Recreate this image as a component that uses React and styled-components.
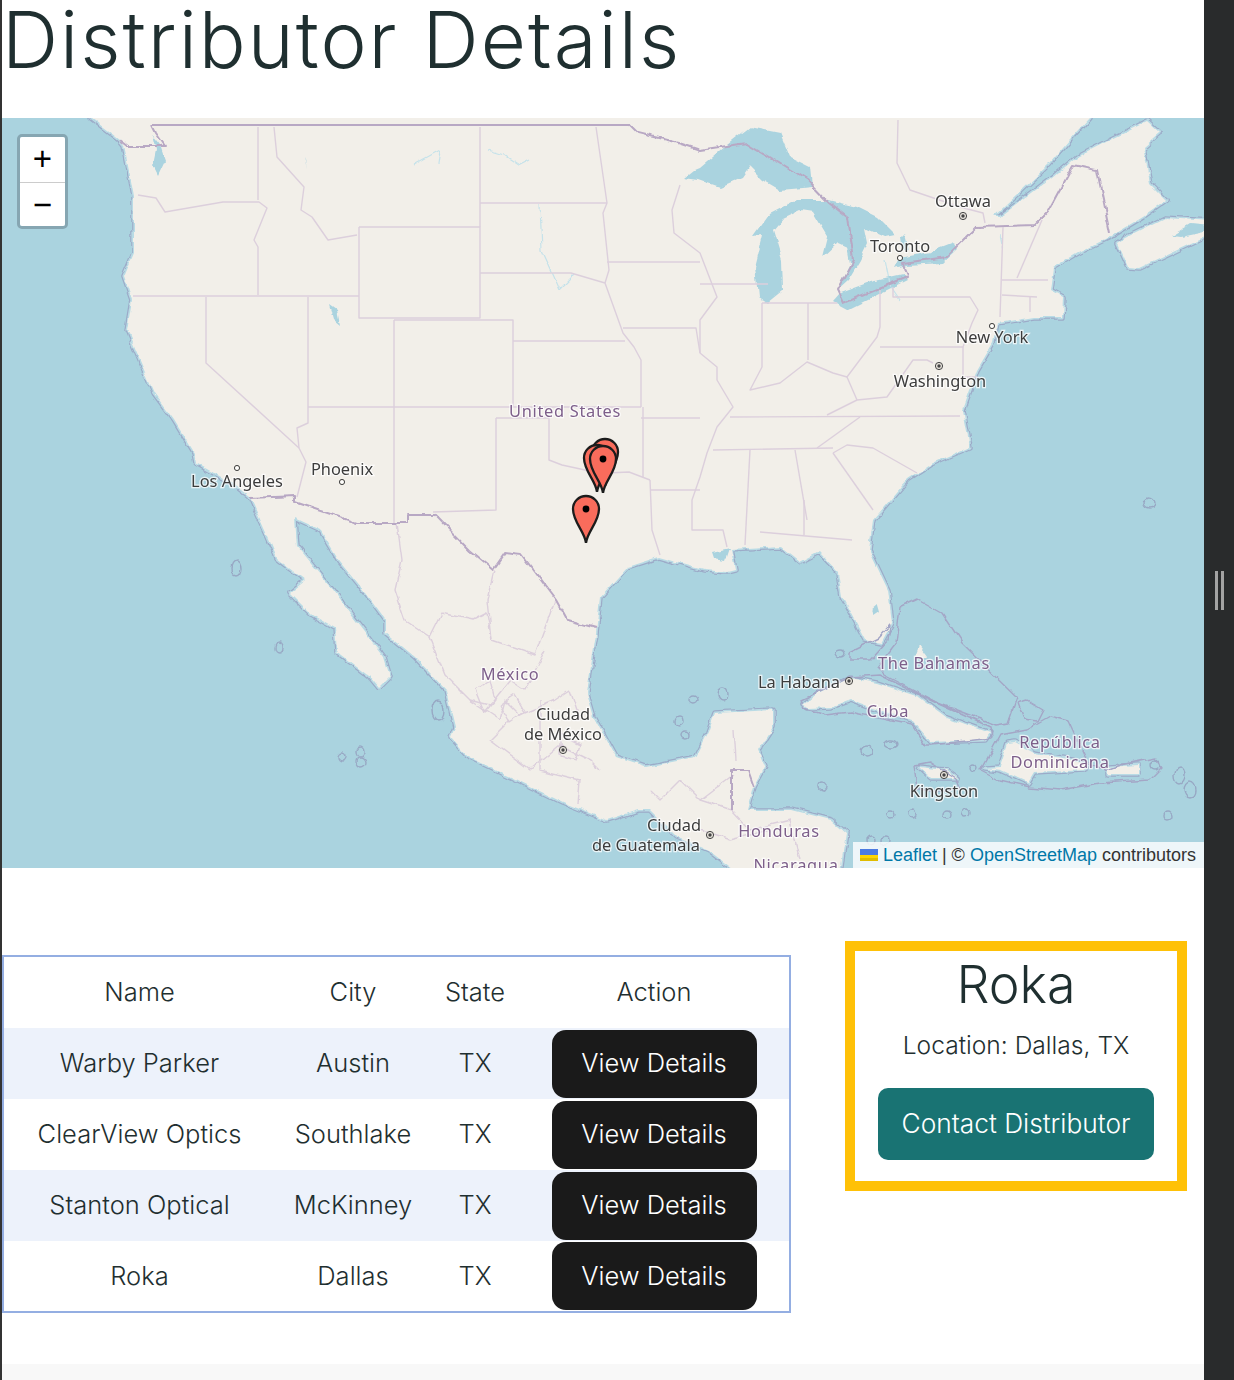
import React from "react";
import styled, { createGlobalStyle } from "styled-components";

const GlobalStyle = createGlobalStyle`
  html, body {
    margin: 0;
    padding: 0;
    background: #fff;
  }
`;

const Shell = styled.div`
  display: flex;
  width: 1234px;
  height: 1380px;
  overflow: hidden;
`;

const Page = styled.main`
  flex: 1;
  min-width: 0;
  display: flex;
  flex-direction: column;
  border-left: 2px solid #333;
  background: #fff;
`;

const Sidebar = styled.aside`
  width: 30px;
  background: #292b2c;
  display: flex;
  align-items: center;
  justify-content: center;
  gap: 3px;
  padding-bottom: 200px;
  box-sizing: border-box;
`;

const Grip = styled.span`
  width: 3px;
  height: 39px;
  background: #a3a3a3;
`;

const Title = styled.h1`
  margin: 0;
  height: 118px;
  box-sizing: border-box;
  font-family: Inter, sans-serif;
  font-weight: 300;
  font-size: 78px;
  letter-spacing: 2px;
  line-height: 80px;
  color: #1f2f30;
  white-space: nowrap;
`;

const MapBox = styled.section`
  position: relative;
  height: 750px;
  overflow: hidden;
  background: #aad3df;
`;

const MapSvg = styled.svg`
  display: block;
  width: 1202px;
  height: 750px;
  filter: blur(0.5px);
`;

const Zoom = styled.div`
  position: absolute;
  left: 15px;
  top: 16px;
  width: 45px;
  display: flex;
  flex-direction: column;
  border: 3px solid #86a6b2;
  border-radius: 5px;
  overflow: hidden;
`;

const ZoomButton = styled.button`
  width: 45px;
  height: 44.5px;
  padding: 0;
  border: 0;
  background: #fff;
  color: #000;
  font-family: "Liberation Sans", sans-serif;
  font-size: 33px;
  line-height: 44px;
  & + & {
    border-top: 1px solid #ccc;
  }
`;

const Attribution = styled.div`
  position: absolute;
  right: 0;
  bottom: 0;
  height: 26px;
  padding: 0 8px 0 7px;
  display: flex;
  align-items: center;
  gap: 5px;
  background: rgba(255, 255, 255, 0.8);
  font-family: "Liberation Sans", sans-serif;
  font-size: 18px;
  color: #333;
  white-space: nowrap;
`;

const AttrLink = styled.a`
  color: #0078a8;
`;

const Flag = styled.svg`
  width: 18px;
  height: 12px;
  display: block;
`;

const Lower = styled.section`
  flex: 1;
  display: flex;
  align-items: flex-start;
  padding-top: 73px;
  gap: 54px;
`;

const Table = styled.table`
  width: 788px;
  margin-top: 14px;
  border-collapse: collapse;
  table-layout: fixed;
  border: 2px solid #94aee2;
  font-family: Inter, sans-serif;
  font-weight: 300;
  font-size: 25.5px;
  color: #1f2f30;
`;

const HeadCell = styled.th`
  height: 69px;
  padding: 0 0 2px;
  font-weight: 300;
  text-align: center;
  width: ${(p) => p.$w}px;
`;

const Row = styled.tr`
  height: 71px;
  background: ${(p) => (p.$tinted ? "#edf2fb" : "#fff")};
`;

const Cell = styled.td`
  padding: 0 0 2px;
  text-align: center;
  white-space: nowrap;
`;

const ActionCell = styled.td`
  padding: 0;
`;

const DetailsButton = styled.button`
  width: 205px;
  height: 68px;
  display: block;
  margin: 0 auto;
  padding: 0 0 2px;
  border: 0;
  border-radius: 14px;
  background: #1a1a1a;
  color: #fff;
  font-family: Inter, sans-serif;
  font-weight: 300;
  font-size: 25.5px;
`;

const Card = styled.aside`
  width: 342px;
  height: 250px;
  box-sizing: border-box;
  border: 10px solid #ffc107;
  display: flex;
  flex-direction: column;
  align-items: center;
  color: #1f2f30;
  font-family: Inter, sans-serif;
  font-weight: 300;
`;

const CardName = styled.h2`
  margin: 4px 0 0;
  font-weight: 300;
  font-size: 52px;
  line-height: 60px;
`;

const CardLocation = styled.p`
  margin: 12px 0 0;
  font-size: 24.6px;
  line-height: 36px;
`;

const ContactButton = styled.button`
  width: 276px;
  height: 72px;
  margin-top: 25px;
  padding: 0 0 2px;
  border: 0;
  border-radius: 10px;
  background: #197373;
  color: #fff;
  font-family: Inter, sans-serif;
  font-weight: 300;
  font-size: 26.3px;
`;

const FooterStrip = styled.div`
  height: 16px;
  background: #f8f8f8;
`;

// map drawing
const Land = styled.polygon`
  fill: #f2efe9;
`;

const Shore = styled.polygon`
  fill: none;
  stroke: ${(p) => (p.$inner ? "#b9dbe5" : "#9cabc8")};
  stroke-width: ${(p) => (p.$inner ? 3.2 : 5.6)};
  stroke-linejoin: round;
`;

const Water = styled.polygon`
  fill: #aad3df;
`;

const Sea = styled.polyline`
  fill: none;
  stroke: #a4a6c6;
  stroke-width: 1.4;
  stroke-linejoin: round;
`;

const Border = styled.polyline`
  fill: none;
  stroke: ${(p) => (p.$country ? "#b8a8c4" : "#dccfdc")};
  stroke-width: ${(p) => (p.$country ? 2 : 1.4)};
  stroke-linejoin: round;
`;

const River = styled.polyline`
  fill: none;
  stroke: #c5e2ea;
  stroke-width: 1.2;
`;

const Islet = styled.ellipse`
  fill: none;
  stroke: #98a8c4;
  stroke-width: 1.4;
`;

const MapLabel = styled.text`
  font-family: "Noto Sans", sans-serif;
  font-size: 16.4px;
  text-anchor: middle;
  letter-spacing: ${(p) => (p.$country ? "0.7px" : "0")};
  fill: ${(p) => (p.$country ? "#7d5f8a" : "#3c3c3c")};
  stroke: rgba(255, 255, 255, 0.75);
  stroke-width: 2.5;
  paint-order: stroke;
`;

const CityRing = styled.circle`
  fill: #e8e4dc;
  stroke: #444;
  stroke-width: 1;
`;

const CityCore = styled.circle`
  fill: ${(p) => (p.$hollow ? "#fff" : "#444")};
`;

const PinShape = styled.path`
  fill: #f96c5c;
  stroke: #1c1c1c;
  stroke-width: 2.3;
`;

const mainland =
  "91,118 91,95 1090,95 1090,118 1070,140 1050,163 1017,195 993,217 1000,217 1053,177 1077,157 1110,140 1147,122 1159,133 1143,147 1150,183 1167,200 1143,217 1110,237 1077,253 1053,267 1050,290 1063,297 1062,317 1033,317 997,323 993,343 977,370 963,410 970,447 933,463 907,480 873,520 869,550 888,590 892,623 881,643 865,640 842,597 838,572 819,552 800,562 781,547 731,550 735,570 727,572 704,570 658,557 627,567 600,597 596,633 587,693 594,717 616,757 646,767 696,757 708,733 715,713 773,710 773,727 758,750 765,767 754,787 748,810 792,810 831,820 846,833 838,885 754,885 708,850 677,837 650,810 638,810 607,820 562,802 513,778 469,757 451,737 455,727 446,690 415,657 386,633 386,620 366,593 339,560 321,530 295,518 297,547 330,587 353,617 384,657 390,677 379,688 370,677 337,652 335,628 312,615 290,593 306,580 277,558 268,537 250,497 232,483 196,463 194,453 174,420 154,393 141,363 127,330 132,300 124,277 134,253 134,197 129,170 124,145 120,140";

const novaScotia = "1117,243 1128,267 1140,268 1225,228 1225,222 1165,218 1125,238";

const greatLakes = [
  "685,178 695,170 700,168 733,140 750,127 780,133 790,157 810,167 812,187 803,188 780,190 763,180 750,167 743,177 720,187 700,180",
  "753,236 768,215 797,200 828,200 857,207 877,217 895,235 885,237 865,228 868,243 860,260 848,280 837,290 840,283 850,263 847,247 838,243 823,257 828,237 813,212 800,210 783,218 773,230 782,260 783,290 767,303 758,297 755,267 763,235",
  "832,302 847,310 907,280 903,275 867,283 840,293",
  "895,268 900,258 930,252 953,243 957,250 943,263 907,265",
  "900,237 904,233 908,250 902,250",
];

const inlandSpots = [
  "330,305 334,320 340,325 337,310",
  "305,158 308,168 306,160",
  "1172,235 1190,224 1210,226 1210,230 1180,236",
  "872,610 878,605 880,612 874,616",
  "712,552 730,548 726,560 714,558",
];

const cuba = "804,705 819,693 850,678 877,683 919,697 946,717 990,733 985,740 931,742 912,720 869,707 850,700 831,707 808,708";
const hispaniola = "1000,767 1008,743 1015,742 1035,753 1088,763 1084,770 1035,773 1029,783 1000,770 985,768";
const puertoRico = "1108,767 1138,765 1138,775 1108,775";
const jamaica = "919,767 946,770 957,778 931,778";
const andros = "919,646 927,657 915,657";
const islands = [novaScotia, cuba, hispaniola, puertoRico, jamaica];

const seaLines = [
  "900,607 917,599 942,613 962,643 1017,697 1008,723 996,725 938,703 885,675 877,667 896,643 900,607",
  "1017,703 1027,700 1044,710 1038,722 1023,720 1017,703",
  "1027,730 1050,717 1069,722 1088,763 1106,770 1120,765 1155,758 1162,768 1150,780 1100,783 1060,790 1030,787 1000,780 981,770 1000,735 1027,730",
  "804,708 802,700 850,677 880,675 931,700 990,727 992,738 931,745 925,745 912,725 850,712 825,715 804,708",
  "914,765 930,762 955,778 960,790 917,790 914,765",
  "850,652 878,638 890,625 888,640 870,660 850,660 850,652",
];

const parallel = "152,125 630,125";

const countryBorders = [
  "630,125 638,133 679,143 700,150 747,143 807,180 828,202 847,217 853,260 837,290 843,303 907,277 903,263 947,257 977,227 1035,225 1047,213 1073,165 1097,170 1110,233",
  "250,498 295,496 295,502 357,523 408,523 408,515 435,515 469,550 493,570 505,553 522,555 556,600 567,620 596,628",
  "731,810 731,770 748,770 754,787",
  "120,140 128,146 165,146 156,133 152,125",
];

const mexicoBorders = [
  "397,523 402,560 395,590 405,620 430,637 442,613 473,620 487,613 492,640 535,655 555,600",
  "430,637 445,675 470,700 490,705 510,680 525,690 545,650",
  "492,640 488,600 495,570",
  "470,700 500,720 505,700 520,715 555,700 570,690 580,720",
  "510,720 490,740 530,770 560,745 590,760 600,770",
  "540,700 540,770 580,780 578,805",
  "476,690 490,680 495,700 485,712 476,690",
  "500,705 515,695 525,712 510,722 500,705",
  "560,735 580,745 575,760 560,755 560,735",
  "650,790 660,800 680,780 700,800 733,775",
  "700,800 731,810 750,830 790,820 800,860",
  "700,830 730,840 770,830",
  "735,760 733,730",
];

const stateBorders = [
  "258,127 258,200",
  "138,195 156,198 165,212 223,202 259,202 267,208 254,240 258,247 258,295",
  "274,127 277,157 304,187 301,210 312,217 328,240 357,235",
  "359,227 480,227 480,318 359,318 359,227",
  "480,127 480,227",
  "480,203 607,203",
  "596,127 607,203 603,213 609,270 605,283",
  "480,273 571,273 605,283 623,333 634,347 641,360 641,407",
  "394,320 513,320 513,407",
  "513,341 625,341",
  "308,407 641,407",
  "496,418 549,418 549,460 562,465 585,470 607,473 629,472 650,480",
  "643,407 643,477",
  "496,418 496,510 433,512",
  "308,297 308,407",
  "133,296 359,296",
  "206,297 206,363 299,448",
  "308,407 308,423 297,428 299,448 306,462 297,497",
  "394,320 394,523",
  "607,262 700,262",
  "623,328 696,328 700,353",
  "641,418 700,418",
  "650,490 700,490",
  "650,480 652,530 660,555",
  "680,185 672,210 674,233 700,253 717,297 700,320 700,353 717,367 717,380 733,407 717,427 707,453 700,477 692,500 692,530 723,530 727,547",
  "700,284 768,284",
  "762,303 837,303",
  "762,303 762,367 750,390 780,383 807,362 833,373 847,377 877,337 880,327 880,290",
  "808,303 808,360",
  "893,287 893,297 970,297 978,310 972,323 963,347 880,347",
  "1000,317 1003,227",
  "1042,220 1017,278",
  "1002,280 1048,280",
  "1002,295 1037,297",
  "1030,297 1030,312",
  "847,377 857,400 887,397 913,360 927,360 933,363",
  "857,400 827,415",
  "730,417 960,416",
  "860,417 817,448",
  "713,450 833,448",
  "833,453 847,445 873,448 917,473",
  "833,453 873,510",
  "795,450 807,520",
  "750,450 745,545",
  "760,532 852,540",
  "804,500 804,535",
  "898,120 897,163 910,190 960,207 983,213 985,223",
  "963,347 963,377 977,377",
];

const rivers = [
  "413,165 440,150 438,165",
  "488,150 505,155 520,165 530,160",
  "540,205 542,250 560,290 575,275",
  "885,260 890,285 900,300",
  "1000,235 1003,250",
];

const islets = [
  [236, 569, 5, 8],
  [279, 647, 4, 5],
  [361, 751, 4, 5],
  [342, 757, 4, 4],
  [360, 762, 5, 5],
  [438, 711, 6, 10],
  [1149, 504, 6, 5],
  [723, 694, 5, 6],
  [694, 700, 4, 4],
  [680, 721, 4, 5],
  [685, 735, 4, 4],
  [867, 751, 6, 5],
  [891, 744, 7, 4],
  [840, 653, 5, 4],
  [822, 786, 4, 4],
  [891, 814, 4, 4],
  [912, 814, 4, 4],
  [974, 768, 4, 4],
  [947, 815, 4, 4],
  [966, 813, 4, 4],
  [1168, 816, 4, 4],
  [1155, 765, 5, 5],
  [1180, 775, 5, 8],
  [1190, 790, 6, 8],
  [871, 840, 4, 5],
  [885, 840, 4, 5],
];

const labels = [
  { text: "Ottawa", x: 963, y: 207 },
  { text: "Toronto", x: 900, y: 252 },
  { text: "New York", x: 992, y: 343 },
  { text: "Washington", x: 940, y: 387 },
  { text: "United States", x: 565, y: 417, country: true },
  { text: "Phoenix", x: 342, y: 475 },
  { text: "Los Angeles", x: 237, y: 487 },
  { text: "México", x: 510, y: 680, country: true },
  { text: "Ciudad", x: 563, y: 720 },
  { text: "de México", x: 563, y: 740 },
  { text: "La Habana", x: 799, y: 688 },
  { text: "The Bahamas", x: 934, y: 669, country: true },
  { text: "Cuba", x: 888, y: 717, country: true },
  { text: "República", x: 1060, y: 748, country: true },
  { text: "Dominicana", x: 1060, y: 768, country: true },
  { text: "Kingston", x: 944, y: 797 },
  { text: "Ciudad", x: 674, y: 831 },
  { text: "de Guatemala", x: 646, y: 851 },
  { text: "Honduras", x: 779, y: 837, country: true },
  { text: "Nicaragua", x: 796, y: 871, country: true },
];

const capitals = [
  [963, 216],
  [939, 366],
  [563, 750],
  [849, 681],
  [944, 775],
  [710, 835],
];

const towns = [
  [900, 258],
  [992, 326],
  [342, 482],
  [237, 468],
];

const pins = [
  { x: 605, y: 486 },
  { x: 597, y: 492 },
  { x: 603, y: 493 },
  { x: 586, y: 543 },
];

const distributors = [
  { name: "Warby Parker", city: "Austin", state: "TX" },
  { name: "ClearView Optics", city: "Southlake", state: "TX" },
  { name: "Stanton Optical", city: "McKinney", state: "TX" },
  { name: "Roka", city: "Dallas", state: "TX" },
];

const MapDrawing = () => (
  <MapSvg viewBox="2 118 1202 750">
    <defs>
      <filter id="rough" filterUnits="userSpaceOnUse" x="-30" y="80" width="1270" height="820">
        <feTurbulence type="fractalNoise" baseFrequency="0.07" numOctaves="3" seed="4" />
        <feDisplacementMap in="SourceGraphic" scale="6" xChannelSelector="R" yChannelSelector="G" />
      </filter>
    </defs>
    <g filter="url(#rough)">
      <Shore points={mainland} />
      <Shore points={mainland} $inner />
      {islands.map((points) => (
        <Shore key={points} points={points} />
      ))}
      {islands.map((points) => (
        <Shore key={points} points={points} $inner />
      ))}
      <Land points={mainland} />
      {islands.map((points) => (
        <Land key={points} points={points} />
      ))}
      <Land points={andros} />
      {greatLakes.map((points) => (
        <Water key={points} points={points} />
      ))}
      {inlandSpots.map((points) => (
        <Water key={points} points={points} />
      ))}
      <Water points="152,135 160,145 165,160 158,175 153,165 156,150" />
      {rivers.map((points) => (
        <River key={points} points={points} />
      ))}
      {mexicoBorders.map((points) => (
        <Border key={points} points={points} />
      ))}
      {countryBorders.map((points) => (
        <Border key={points} points={points} $country />
      ))}
      {seaLines.map((points) => (
        <Sea key={points} points={points} />
      ))}
      {islets.map(([cx, cy, rx, ry]) => (
        <Islet key={`${cx}-${cy}`} cx={cx} cy={cy} rx={rx} ry={ry} />
      ))}
    </g>
    {stateBorders.map((points) => (
      <Border key={points} points={points} />
    ))}
    <Border points={parallel} $country />
    {labels.map((l) => (
      <MapLabel key={l.text + l.x} x={l.x} y={l.y} $country={l.country}>
        {l.text}
      </MapLabel>
    ))}
    {capitals.map(([x, y]) => (
      <g key={x}>
        <CityRing cx={x} cy={y} r="3.6" />
        <CityCore cx={x} cy={y} r="1.7" />
      </g>
    ))}
    {towns.map(([x, y]) => (
      <g key={x}>
        <CityRing cx={x} cy={y} r="2.6" />
        <CityCore cx={x} cy={y} r="1.6" $hollow />
      </g>
    ))}
    {pins.map((p) => (
      <g key={p.x} transform={`translate(${p.x} ${p.y})`}>
        <PinShape d="M0 0 C-1 -11 -13 -21 -13 -34 A13 13 0 1 1 13 -34 C13 -21 1 -11 0 0Z" />
        <circle cx="0" cy="-34" r="3.4" fill="#000" />
      </g>
    ))}
  </MapSvg>
);

const App = () => {
  return (
    <Shell>
      <GlobalStyle />
      <Page>
        <Title>Distributor Details</Title>
        <MapBox>
          <MapDrawing />
          <Zoom>
            <ZoomButton>+</ZoomButton>
            <ZoomButton>−</ZoomButton>
          </Zoom>
          <Attribution>
            <Flag viewBox="0 0 12 8">
              <rect width="12" height="4" fill="#4c7be1" />
              <rect y="4" width="12" height="2" fill="#ffd500" />
              <rect y="6" width="12" height="2" fill="#e0bc00" />
            </Flag>
            <span>
              <AttrLink>Leaflet</AttrLink> | © <AttrLink>OpenStreetMap</AttrLink> contributors
            </span>
          </Attribution>
        </MapBox>
        <Lower>
          <Table>
            <thead>
              <tr>
                <HeadCell $w={271}>Name</HeadCell>
                <HeadCell $w={156}>City</HeadCell>
                <HeadCell $w={88}>State</HeadCell>
                <HeadCell $w={270}>Action</HeadCell>
              </tr>
            </thead>
            <tbody>
              {distributors.map((d, i) => (
                <Row key={d.name} $tinted={i % 2 === 0}>
                  <Cell>{d.name}</Cell>
                  <Cell>{d.city}</Cell>
                  <Cell>{d.state}</Cell>
                  <ActionCell>
                    <DetailsButton>View Details</DetailsButton>
                  </ActionCell>
                </Row>
              ))}
            </tbody>
          </Table>
          <Card>
            <CardName>Roka</CardName>
            <CardLocation>Location: Dallas, TX</CardLocation>
            <ContactButton>Contact Distributor</ContactButton>
          </Card>
        </Lower>
        <FooterStrip />
      </Page>
      <Sidebar>
        <Grip />
        <Grip />
      </Sidebar>
    </Shell>
  );
};

export default App;
